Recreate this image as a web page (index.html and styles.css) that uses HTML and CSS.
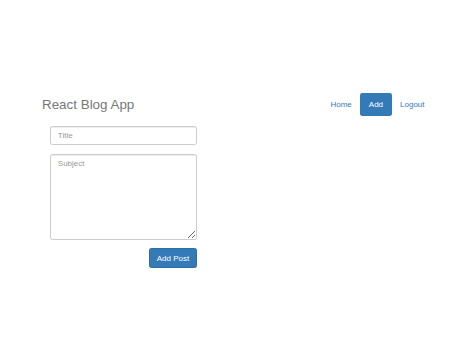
FILE: index.html
```html
<!DOCTYPE html>
<html>
<head>
<meta charset="utf-8">
<link rel="stylesheet" href="styles.css">
</head>
<body>
<div class="page">
  <header class="header">
    <h3 class="brand">React Blog App</h3>
    <nav class="pills">
      <a class="pill" href="#">Home</a>
      <a class="pill active" href="#">Add</a>
      <a class="pill" href="#">Logout</a>
    </nav>
  </header>
  <form class="post-form">
    <div class="group">
      <input class="control" type="text" placeholder="Title">
    </div>
    <div class="group">
      <textarea class="control area" placeholder="Subject"></textarea>
    </div>
    <div class="actions">
      <button class="btn" type="button">Add Post</button>
    </div>
  </form>
</div>
</body>
</html>
```
FILE: styles.css
```css
* { box-sizing: border-box; }
html, body { margin: 0; padding: 0; background: #fff; }
body {
  font-family: "Liberation Sans", Arial, Helvetica, sans-serif;
  font-size: 8px;
  color: #333;
}
.page {
  padding-top: 93px;
}
.header {
  display: flex;
  justify-content: space-between;
  align-items: center;
  padding: 0 41px 0 42px;
}
.brand {
  margin: 0;
  font-size: 13.4px;
  line-height: 15px;
  font-weight: normal;
  color: #777;
}
.pills {
  display: flex;
  gap: 0;
}
.pill {
  display: block;
  padding: 5.7px 8.5px;
  line-height: 11.4px;
  font-size: 8px;
  color: #337ab7;
  text-decoration: none;
  border-radius: 2.3px;
}
.pill.active {
  background: #337ab7;
  color: #fff;
}
.post-form {
  margin: 10px 0 0 50px;
  width: 147px;
}
.group {
  margin-bottom: 8.5px;
}
.control {
  display: block;
  width: 100%;
  height: 19.4px;
  padding: 3.4px 6.8px;
  font-family: inherit;
  font-size: 8px;
  line-height: 11.4px;
  color: #555;
  background: #fff;
  border: 1px solid #ccc;
  border-radius: 2.3px;
  box-shadow: inset 0 1px 1px rgba(0,0,0,.075);
  margin: 0;
  outline: none;
}
.control::placeholder { color: #999; }
.area {
  height: 86px;
  resize: vertical;
}
.actions {
  display: flex;
  justify-content: flex-end;
}
.btn {
  font-family: inherit;
  font-size: 8px;
  line-height: 11.4px;
  padding: 3.4px 6.8px;
  color: #fff;
  background: #337ab7;
  border: 1px solid #2e6da4;
  border-radius: 2.3px;
  margin: 0;
  cursor: pointer;
}
```
